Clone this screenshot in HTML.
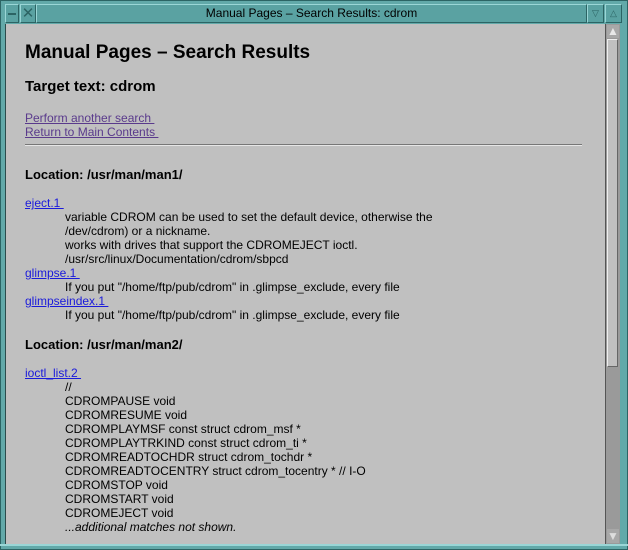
<!DOCTYPE html><html><head><style>
body{margin:0;width:628px;height:550px;background:#62a9a9;position:relative;overflow:hidden;font-family:"Liberation Sans",sans-serif;}
.a{position:absolute;white-space:nowrap;font-size:12px;line-height:16px;color:#000;margin-top:1px}
.b{font-weight:bold}
.l{color:#1a1adb;text-decoration:underline}
.v{color:#5a3a8c;text-decoration:underline}
.i{left:65px}
</style></head><body>
<div style="position:absolute;left:0;top:0;width:628px;height:550px;border:1px solid #2c6464;box-sizing:border-box"></div>
<div style="position:absolute;left:5px;top:4px;width:14px;height:19px;background:#5aa2a2;border:1px solid #9ad6d6;border-right-color:#2c6464;border-bottom-color:#2c6464;box-sizing:border-box"><div style="position:absolute;left:2px;top:8px;width:8px;height:2px;background:#2c6464"></div></div>
<div style="position:absolute;left:20px;top:4px;width:16px;height:19px;background:#5aa2a2;border:1px solid #9ad6d6;border-right-color:#2c6464;border-bottom-color:#2c6464;box-sizing:border-box;color:#2c6464;font-size:15px;line-height:17px;text-align:center">✕</div>
<div style="position:absolute;left:36px;top:4px;width:551px;height:19px;background:#5aa2a2;border:1px solid #9ad6d6;border-right-color:#2c6464;border-bottom-color:#2c6464;box-sizing:border-box;font-size:12px;line-height:17px;text-align:center;color:#000">Manual Pages – Search Results: cdrom</div>
<div style="position:absolute;left:587px;top:4px;width:17px;height:19px;background:#5aa2a2;border:1px solid #9ad6d6;border-right-color:#2c6464;border-bottom-color:#2c6464;box-sizing:border-box;font-size:9px;line-height:17px;text-align:center;color:#2c6464">▽</div>
<div style="position:absolute;left:605px;top:4px;width:17px;height:19px;background:#5aa2a2;border:1px solid #9ad6d6;border-right-color:#2c6464;border-bottom-color:#2c6464;box-sizing:border-box;font-size:9px;line-height:17px;text-align:center;color:#2c6464">△</div>
<div style="position:absolute;left:5px;top:24px;width:600px;height:520px;background:#c0c0c0;border-left:1px solid #2c4c4c;box-sizing:border-box"></div>
<div style="position:absolute;left:605px;top:24px;width:15px;height:520px;background:#9a9a9a;border-left:1px solid #555;box-sizing:border-box"></div>
<div style="position:absolute;left:607px;top:25px;width:12px;height:13px;color:#e8e8e8;font-size:12px;line-height:13px;background:#a8a8a8;text-align:center">▲</div>
<div style="position:absolute;left:607px;top:39px;width:11px;height:328px;background:#c0c0c0;border:1px solid #eee;border-right-color:#666;border-bottom-color:#666;box-sizing:border-box"></div>
<div style="position:absolute;left:607px;top:529px;width:12px;height:14px;color:#ddd;font-size:12px;line-height:14px;background:#a8a8a8;text-align:center">▼</div>
<div style="position:absolute;left:0;top:544px;width:628px;height:2px;background:#9ad6d6"></div>

<div class="a b" style="left:25px;top:40px;font-size:19px;line-height:24px">Manual Pages – Search Results</div>
<div class="a b" style="left:25px;top:77px;font-size:15px;line-height:18px">Target text: cdrom</div>
<div class="a v" style="left:25px;top:109px">Perform another search&nbsp;</div>
<div class="a v" style="left:25px;top:123px">Return to Main Contents&nbsp;</div>
<div style="position:absolute;left:25px;top:144px;width:557px;height:1px;background:#777;border-bottom:1px solid #e6e6e6"></div>
<div class="a b" style="left:25px;top:166px;font-size:13px">Location: /usr/man/man1/</div>
<div class="a l" style="left:25px;top:194px">eject.1&nbsp;</div>
<div class="a i" style="top:208px">variable CDROM can be used to set the default device, otherwise the</div>
<div class="a i" style="top:222px">/dev/cdrom) or a nickname.</div>
<div class="a i" style="top:236px">works with drives that support the CDROMEJECT ioctl.</div>
<div class="a i" style="top:250px">/usr/src/linux/Documentation/cdrom/sbpcd</div>
<div class="a l" style="left:25px;top:264px">glimpse.1&nbsp;</div>
<div class="a i" style="top:278px">If you put "/home/ftp/pub/cdrom" in .glimpse_exclude, every file</div>
<div class="a l" style="left:25px;top:292px">glimpseindex.1&nbsp;</div>
<div class="a i" style="top:306px">If you put "/home/ftp/pub/cdrom" in .glimpse_exclude, every file</div>
<div class="a b" style="left:25px;top:336px;font-size:13px">Location: /usr/man/man2/</div>
<div class="a l" style="left:25px;top:364px">ioctl_list.2&nbsp;</div>
<div class="a i" style="top:378px">//</div>
<div class="a i" style="top:392px">CDROMPAUSE void</div>
<div class="a i" style="top:406px">CDROMRESUME void</div>
<div class="a i" style="top:420px">CDROMPLAYMSF const struct cdrom_msf *</div>
<div class="a i" style="top:434px">CDROMPLAYTRKIND const struct cdrom_ti *</div>
<div class="a i" style="top:448px">CDROMREADTOCHDR struct cdrom_tochdr *</div>
<div class="a i" style="top:462px">CDROMREADTOCENTRY struct cdrom_tocentry * // I-O</div>
<div class="a i" style="top:476px">CDROMSTOP void</div>
<div class="a i" style="top:490px">CDROMSTART void</div>
<div class="a i" style="top:504px">CDROMEJECT void</div>
<div class="a i" style="top:518px;font-style:italic">...additional matches not shown.</div>
</body></html>
